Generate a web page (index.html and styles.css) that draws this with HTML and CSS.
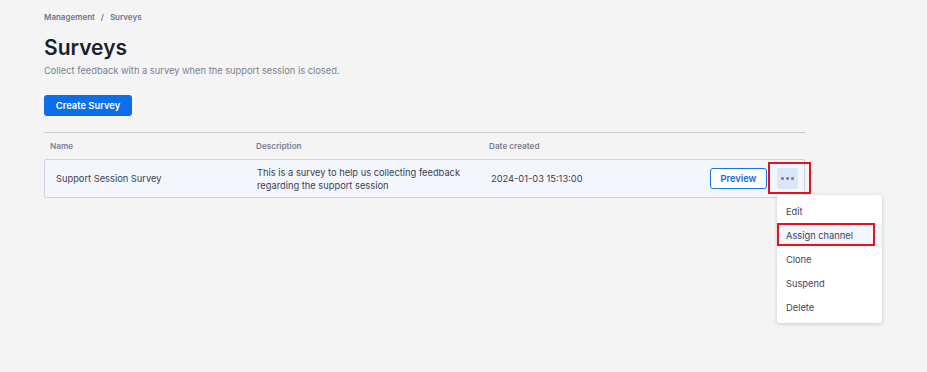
FILE: index.html
```html
<!DOCTYPE html>
<html>
<head>
<meta charset="utf-8">
<link rel="stylesheet" href="styles.css">
</head>
<body>
<div class="page">
  <div class="crumbs"><span>Management</span><span class="sep">/</span><span>Surveys</span></div>
  <h1 class="title">Surveys</h1>
  <p class="subtitle">Collect feedback with a survey when the support session is closed.</p>
  <button class="btn-primary">Create Survey</button>

  <div class="table">
    <div class="thead">
      <div>Name</div>
      <div>Description</div>
      <div>Date created</div>
    </div>
    <div class="row">
      <div class="cell">Support Session Survey</div>
      <div class="cell desc">This is a survey to help us collecting feedback<br>regarding the support session</div>
      <div class="cell">2024-01-03 15:13:00</div>
      <div class="actions">
        <button class="btn-outline">Preview</button>
        <div class="more-wrap">
          <button class="btn-more"><span></span><span></span><span></span></button>
          <div class="annot annot-more"></div>
          <div class="menu">
            <div class="item">Edit</div>
            <div class="item active">Assign channel<div class="annot annot-item"></div></div>
            <div class="item">Clone</div>
            <div class="item">Suspend</div>
            <div class="item">Delete</div>
          </div>
        </div>
      </div>
    </div>
  </div>
</div>
</body>
</html>
```
FILE: styles.css
```css
* { box-sizing: border-box; }
html, body { margin: 0; padding: 0; }
body {
  background: #f4f4f4;
  font-family: Inter, "Noto Sans", "Liberation Sans", sans-serif;
  width: 927px;
  height: 372px;
  overflow: hidden;
}
.page {
  padding: 11px 0 0 44px;
  width: 805px;
}
.crumbs {
  font-size: 8px;
  line-height: 12px;
  font-weight: 600;
  color: #707487;
  display: flex;
  gap: 6px;
}
.title {
  margin: 11px 0 0;
  font-size: 21px;
  line-height: 28px;
  font-weight: 600;
  color: #1b1f2e;
}
.subtitle {
  margin: 2px 0 0;
  font-size: 9.3px;
  line-height: 14px;
  color: #7b7f92;
}
.btn-primary {
  margin-top: 17px;
  width: 88px;
  height: 21px;
  border: none;
  border-radius: 3px;
  background: #0c6fe9;
  color: #fff;
  font-family: inherit;
  font-size: 9.4px;
  font-weight: 600;
  padding: 0;
  display: block;
}
.table {
  margin-top: 16px;
  border-top: 1px solid #c9ccd3;
}
.thead {
  display: grid;
  grid-template-columns: 206px 233px 1fr;
  padding-left: 6px;
  height: 26px;
  align-items: center;
  font-size: 8.2px;
  font-weight: 600;
  color: #7a7f95;
}
.row {
  display: grid;
  grid-template-columns: 201px 234px 1fr auto;
  align-items: center;
  height: 39px;
  padding: 0 6px 0 11px;
  background: #f3f7fd;
  border: 1px solid #d0d3da;
  border-radius: 2px;
  font-size: 9.3px;
  color: #3b4052;
}
.desc { line-height: 13px; }
.actions {
  display: flex;
  align-items: center;
  gap: 10px;
}
.btn-outline {
  width: 57px;
  height: 21px;
  border: 1px solid #1a73e8;
  border-radius: 3px;
  background: #fff;
  color: #1c63d6;
  font-family: inherit;
  font-size: 9.3px;
  font-weight: 600;
  padding: 0;
}
.more-wrap { position: relative; }
.btn-more {
  width: 21px;
  height: 21px;
  border: none;
  border-radius: 3px;
  background: #d9e6fb;
  padding: 0;
  display: flex;
  align-items: center;
  justify-content: center;
  gap: 2.5px;
}
.btn-more span {
  width: 2.5px;
  height: 2.5px;
  border-radius: 50%;
  background: #7d8294;
}
.annot {
  position: absolute;
  border: 2px solid #e0141f;
  pointer-events: none;
}
.annot-more {
  left: -9px;
  top: -6px;
  width: 43px;
  height: 32px;
}
.menu {
  position: absolute;
  left: 0;
  top: 27px;
  width: 105px;
  height: 128px;
  background: #fff;
  border-radius: 3px;
  box-shadow: 0 1px 4px rgba(0, 0, 0, 0.18);
  padding-top: 5px;
  z-index: 5;
}
.item {
  position: relative;
  height: 24px;
  line-height: 24px;
  padding-left: 9px;
  font-size: 9.3px;
  color: #41465a;
}
.item.active { background: #f2f7fe; }
.annot-item {
  left: 0;
  top: -1px;
  width: 98px;
  height: 23px;
}
```
